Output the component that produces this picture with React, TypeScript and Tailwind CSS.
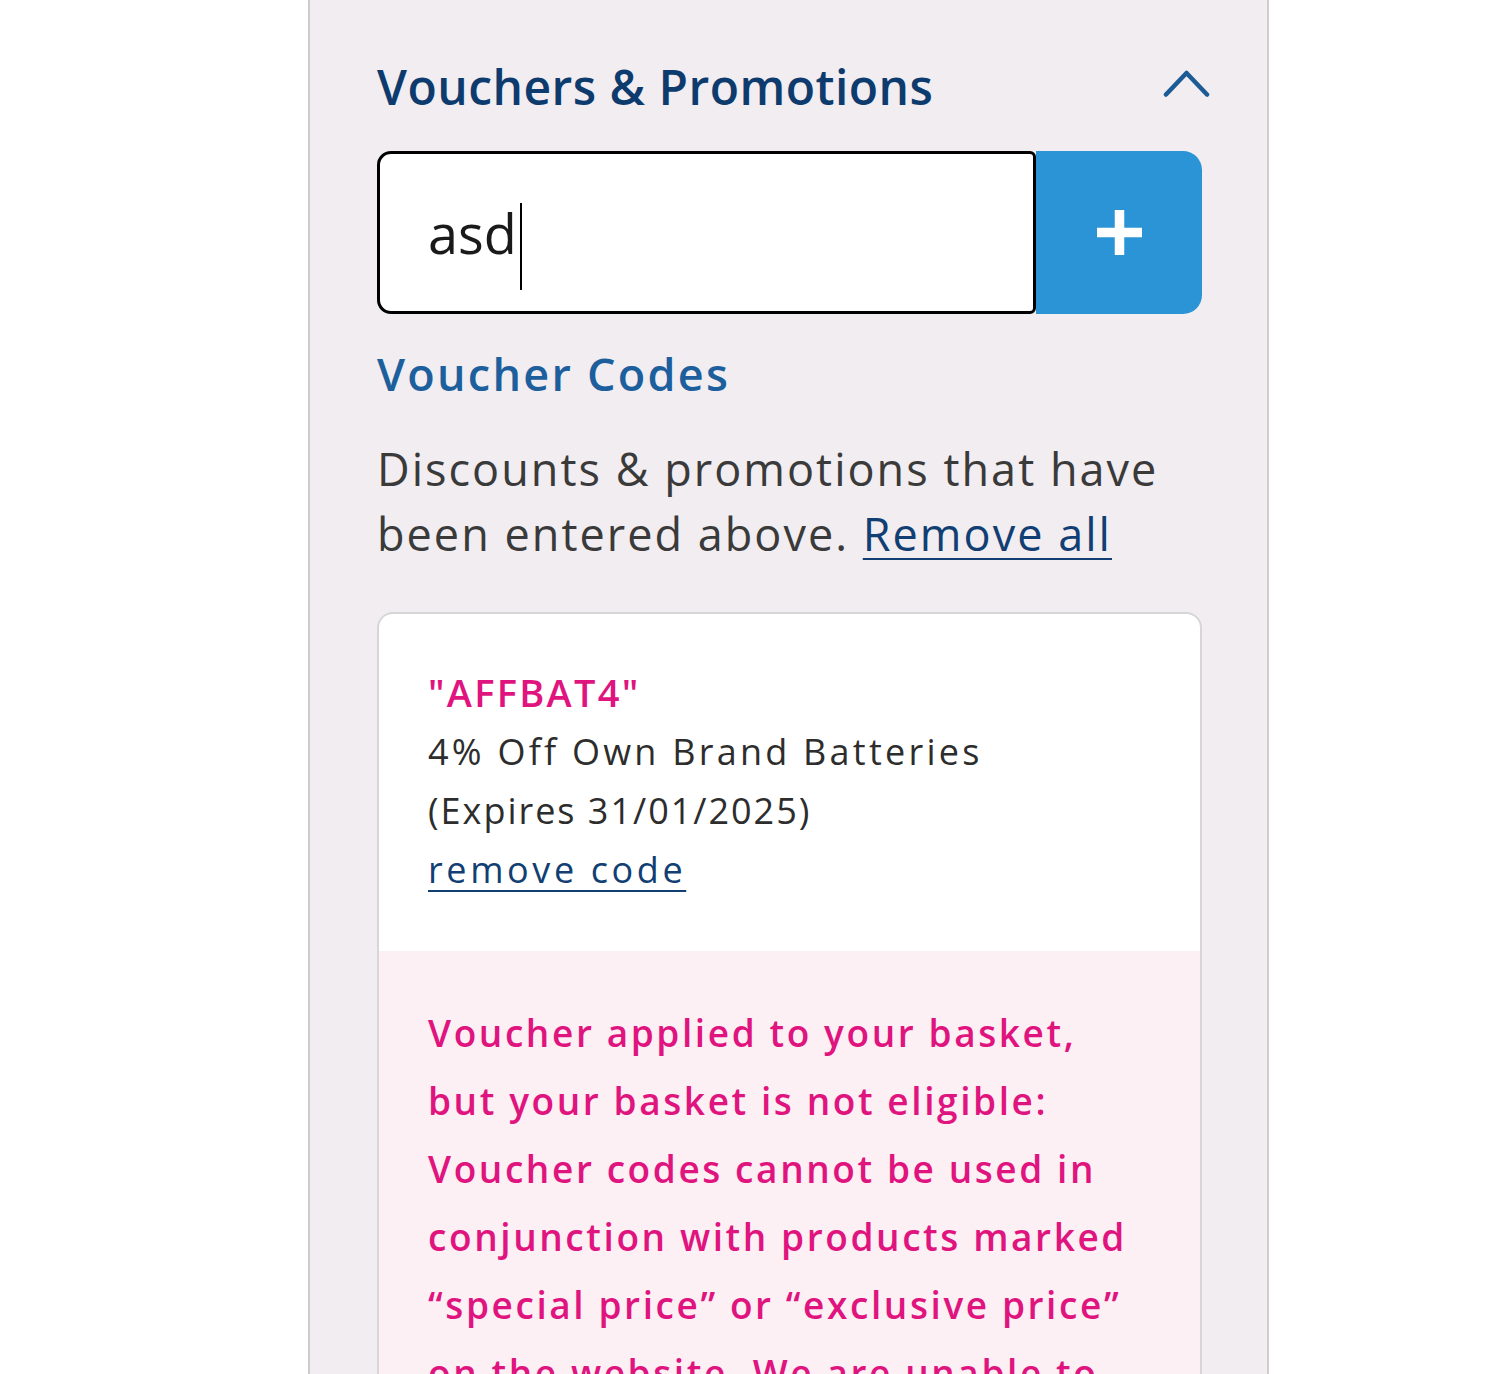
// Vouchers & Promotions panel (zoomed checkout sidebar)

function ChevronUp() {
  return (
    <svg width="47" height="30" viewBox="0 0 47 30" fill="none" className="shrink-0 mt-[10px] mr-[2px]">
      <path d="M3 26.5 L23.5 5 L44 26.5" stroke="#1d5b95" strokeWidth="4.5" strokeLinecap="round" strokeLinejoin="round" />
    </svg>
  );
}

function PlusIcon() {
  return (
    <svg width="47" height="47" viewBox="0 0 47 47" fill="none">
      <path d="M23.5 1 V46 M1 23.5 H46" stroke="#ffffff" strokeWidth="9.5" />
    </svg>
  );
}

export default function App() {
  return (
    <div className="min-h-screen bg-white font-['Open_Sans',sans-serif]">
      <div className="ml-[308px] w-[961px] min-h-[1374px] border-x-2 border-[#cdcdcd] bg-[#f1edf1] pl-[67px] pr-[65px] pt-[58px]">
        {/* Header */}
        <div className="flex items-start justify-between -mr-[10px]">
          <h2 className="text-[48px] leading-[58px] font-semibold tracking-[0.01em] text-[#0e3b6d]">
            Vouchers &amp; Promotions
          </h2>
          <ChevronUp />
        </div>

        {/* Code input */}
        <div className="mt-[35px] flex h-[163px]">
          <div className="flex-1 rounded-l-[14px] rounded-r-[6px] border-[3px] border-black bg-white pl-[48px] pt-[28px] flex items-center">
            <div className="flex items-start">
              <span className="text-[54px] leading-[60px] text-[#1a1a1a]">asd</span>
              <span className="ml-[3px] h-[87px] w-[2px] bg-black" />
            </div>
          </div>
          <button className="w-[166px] rounded-r-[19px] bg-[#2a94d6] flex items-center justify-center">
            <PlusIcon />
          </button>
        </div>

        {/* Voucher codes */}
        <h3 className="mt-[32px] text-[45px] leading-[56px] font-semibold tracking-[0.05em] text-[#1c5f9c]">
          Voucher Codes
        </h3>
        <p className="mt-[34px] text-[45px] leading-[65px] tracking-[0.045em] text-[#3a3a3a]">
          Discounts &amp; promotions that have been entered above.{" "}
          <a href="#" className="underline underline-offset-[7px] decoration-2 text-[#113f73]">
            Remove all
          </a>
        </p>

        {/* Applied voucher card */}
        <div className="mt-[46px] rounded-t-[16px] border-x-2 border-t-2 border-[#d6d6d6] bg-white overflow-hidden">
          <div className="pl-[49px] pr-[40px] pt-[49px] pb-[44px] leading-[59px]">
            <p className="text-[38px] font-semibold tracking-[0.06em] text-[#e0147e]">"AFFBAT4"</p>
            <p className="text-[36px] tracking-[0.09em] text-[#2d2d2d]">4% Off Own Brand Batteries</p>
            <p className="text-[36px] tracking-[0.055em] text-[#2d2d2d]">(Expires 31/01/2025)</p>
            <a href="#" className="text-[36px] tracking-[0.1em] underline underline-offset-[7px] decoration-2 text-[#113f73]">
              remove code
            </a>
          </div>
          <div className="bg-[#fdf0f5] pl-[49px] pr-[48px] pt-[48px] pb-[40px] text-[37px] leading-[68px] font-semibold tracking-[0.07em] text-[#e0147e]">
            Voucher applied to your basket,
            <br />
            but your basket is not eligible: Voucher codes cannot be used in conjunction with products marked
            “special price” or “exclusive price” on the website. We are unable to apply this voucher to your basket.
          </div>
        </div>
      </div>
    </div>
  );
}
